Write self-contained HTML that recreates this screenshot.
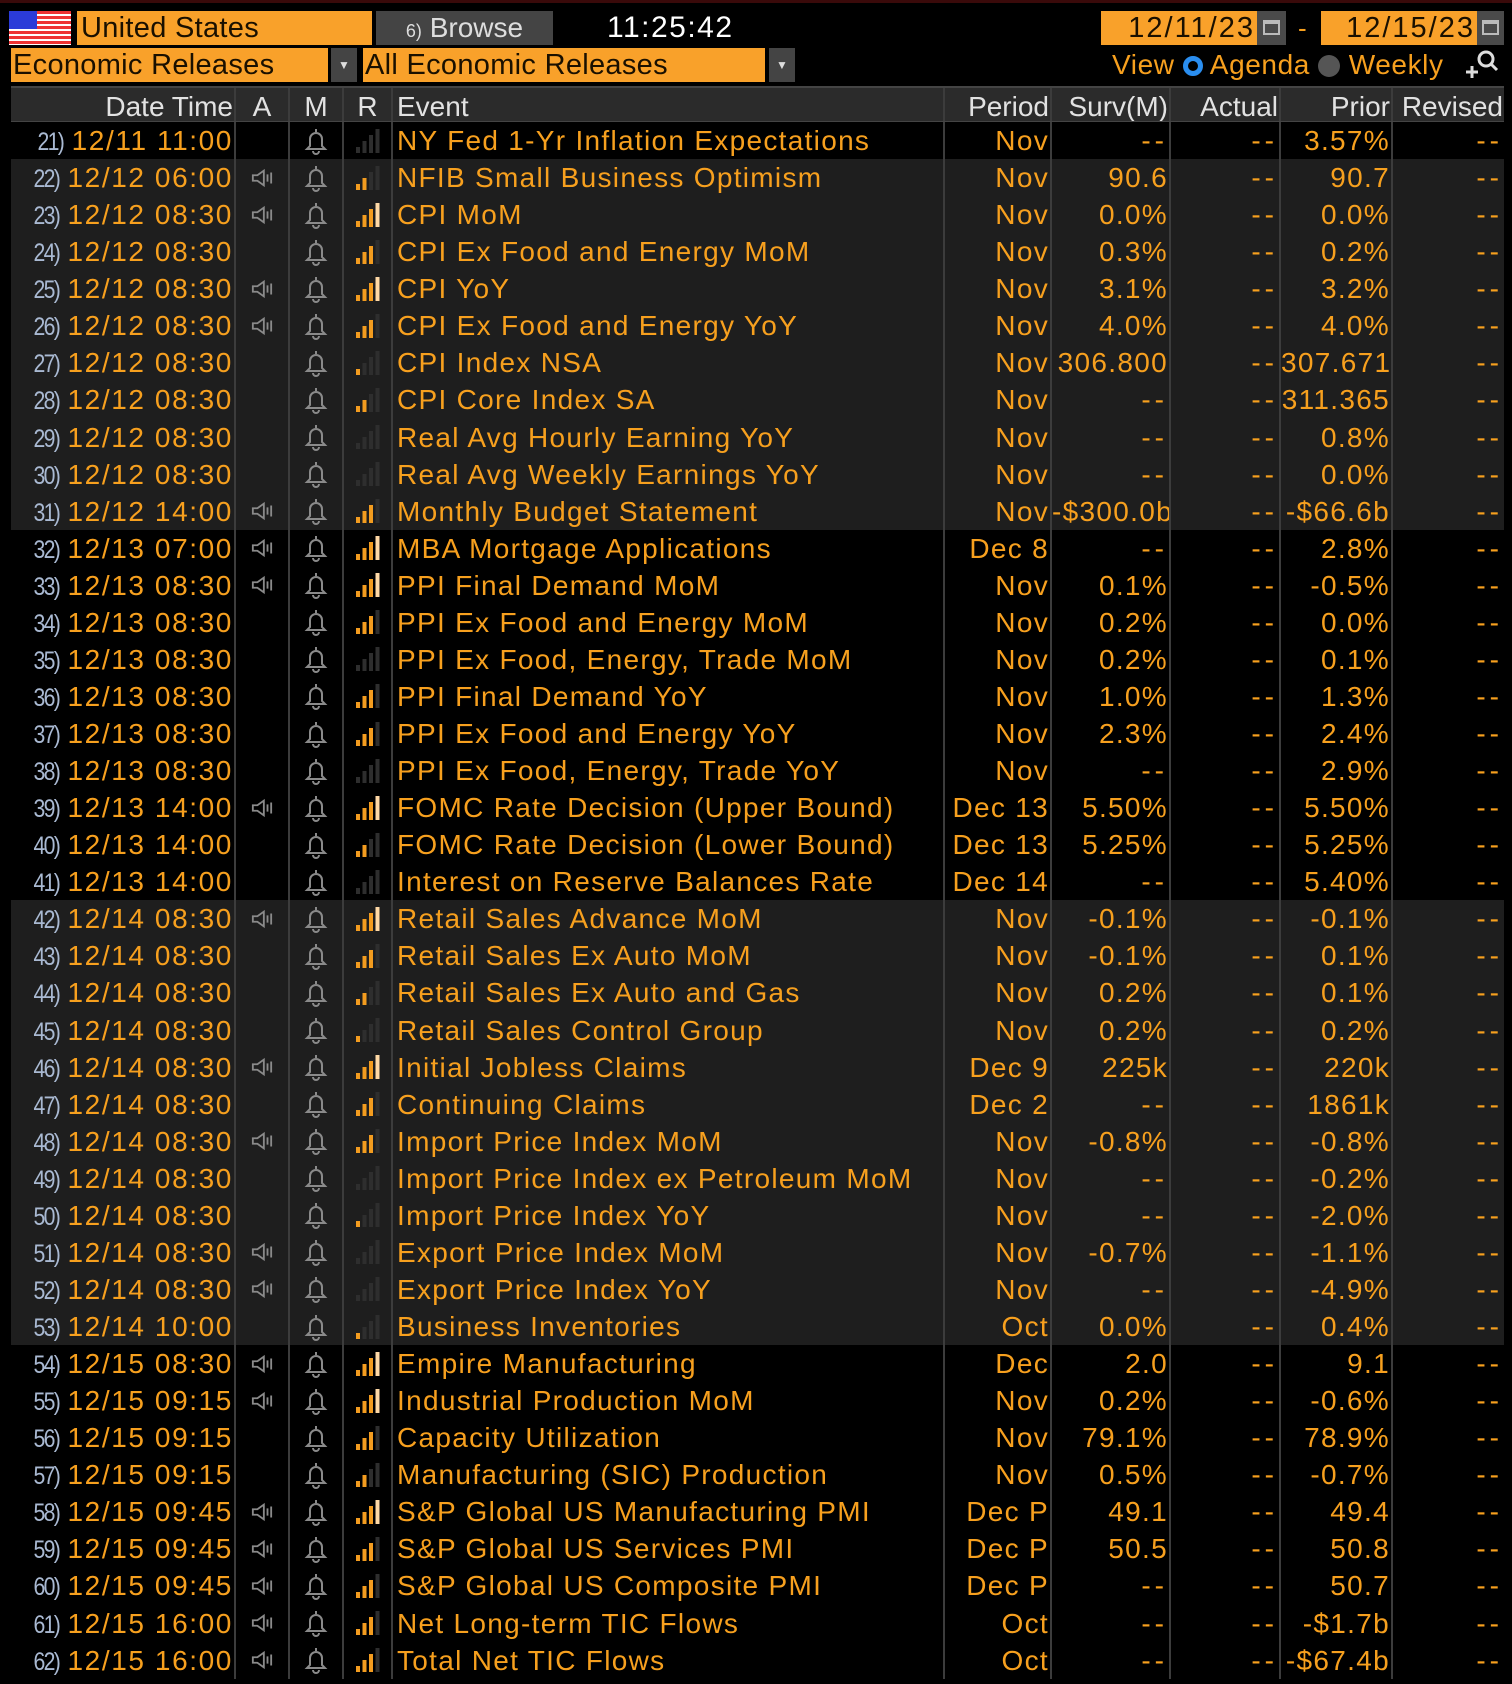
<!DOCTYPE html>
<html><head><meta charset="utf-8"><style>
*{margin:0;padding:0;box-sizing:border-box}
body{width:1512px;height:1684px;background:#000;overflow:hidden;font-family:"Liberation Sans",sans-serif;position:relative;color:#f7a01e}
.ab{position:absolute}
.topline{left:0;top:0;width:1512px;height:3px;background:#3a0a0a}
.ob{background:#f9a12a;color:#1a1000;font-size:29px;line-height:34px;white-space:nowrap;overflow:hidden;letter-spacing:0.3px}
.gb{background:#444;color:#ddd}
.cal{background:#4a4a4a}
#tbl{position:absolute;left:11px;top:86px;width:1493px}
.r{display:grid;grid-template-columns:225px 54px 54px 49px 552px 107px 119px 110px 112px 111px;height:37.07px;font-size:28px;line-height:37px;white-space:nowrap;letter-spacing:1.3px}
.r>div{border-right:2px solid #3c3c3c;overflow:hidden;position:relative}
.r>div:last-child{border-right:none}
.g{background:#1e1e1e}
.k{background:#000}
.h{background:#2b2b2b;color:#e2e2e2;height:36px;border-top:2px solid #444;border-bottom:1px solid #444;letter-spacing:0}
.rt{text-align:right;padding-right:1px}
.t{letter-spacing:1.6px}
.n{font-size:25px;color:#a9b9d2;letter-spacing:-2px;margin-right:8px;display:inline-block;transform:scaleX(.85);transform-origin:right}
.ev{padding-left:4px}
.ic{display:flex;align-items:center;justify-content:center}
.d{letter-spacing:4px}
svg{display:block}
</style></head><body>
<svg width="0" height="0" style="position:absolute">
<defs>
<symbol id="bell" viewBox="0 0 26 28"><path d="M13 2v3M7 19V12a6 6 0 0 1 12 0v7l3 3H4z M10 24a3 3 0 0 0 6 0" fill="none" stroke="#8a8a8a" stroke-width="2"/></symbol>
<symbol id="spk" viewBox="0 0 26 24"><path d="M3 9h5l7-5v16l-7-5H3z" fill="none" stroke="#8a8a8a" stroke-width="2"/><path d="M19 8v8M23 6v12" stroke="#8a8a8a" stroke-width="2"/></symbol>
</defs></svg>
<div class="ab topline"></div>
<div class="ab" style="left:9px;top:11px;width:62px;height:34px;background:repeating-linear-gradient(#e33 0 3px,#fff 3px 5px)">
<div style="width:28px;height:18px;background:#2b3bd8"></div></div>
<div class="ab ob" style="left:77px;top:11px;width:295px;height:34px;padding-left:4px">United States</div>
<div class="ab gb" style="left:376px;top:11px;width:177px;height:34px;font-size:28px;line-height:34px;text-align:center"><span style="font-size:18px">6)</span> Browse</div>
<div class="ab" style="left:607px;top:11px;color:#fff;font-size:30px;line-height:34px;letter-spacing:1.5px">11:25:42</div>
<div class="ab ob" style="left:1101px;top:11px;width:156px;height:34px;text-align:right;padding-right:2px;letter-spacing:2px">12/11/23</div>
<div class="ab cal" style="left:1257px;top:11px;width:29px;height:34px"><div style="margin:9px 6px;width:17px;height:15px;border:2px solid #bbb;border-top-width:4px"></div></div>
<div class="ab" style="left:1298px;top:11px;color:#f7a01e;font-size:26px;line-height:34px">-</div>
<div class="ab ob" style="left:1321px;top:11px;width:156px;height:34px;text-align:right;padding-right:2px;letter-spacing:2px">12/15/23</div>
<div class="ab cal" style="left:1477px;top:11px;width:27px;height:34px"><div style="margin:9px 5px;width:17px;height:15px;border:2px solid #bbb;border-top-width:4px"></div></div>
<div class="ab ob" style="left:11px;top:48px;width:317px;height:34px;padding-left:2px">Economic Releases</div>
<div class="ab gb" style="left:331px;top:48px;width:26px;height:34px;font-size:12px;line-height:34px;text-align:center">▼</div>
<div class="ab ob" style="left:363px;top:48px;width:402px;height:34px;padding-left:2px">All Economic Releases</div>
<div class="ab gb" style="left:769px;top:48px;width:26px;height:34px;font-size:12px;line-height:34px;text-align:center">▼</div>
<div class="ab" style="left:1112px;top:48px;font-size:28px;line-height:34px;color:#f7a01e;white-space:nowrap;letter-spacing:0.6px">View <span style="display:inline-block;width:20px;height:20px;border:5px solid #2a8ef0;border-radius:50%;vertical-align:-2px"></span> Agenda <span style="display:inline-block;width:22px;height:22px;background:#555;border-radius:50%;vertical-align:-3px"></span> Weekly</div>
<svg class="ab" style="left:1462px;top:48px" width="38" height="32" viewBox="0 0 38 32"><circle cx="24" cy="11" r="7" fill="none" stroke="#ddd" stroke-width="3"/><path d="M29 16l6 6M4 24h12M10 18v12" stroke="#ddd" stroke-width="3"/></svg>

<div id="tbl">
<div class="r h"><div class="rt">Date Time</div><div style="text-align:center">A</div><div style="text-align:center">M</div><div style="text-align:center">R</div><div class="ev">Event</div><div class="rt">Period</div><div class="rt">Surv(M)</div><div class="rt">Actual</div><div class="rt">Prior</div><div class="rt">Revised</div></div>
<div id="rows"></div>
</div>
<script>
var D=[
[21,"12/11 11:00",0,0,"NY Fed 1-Yr Inflation Expectations","Nov","--","--","3.57%","k"],
[22,"12/12 06:00",1,2,"NFIB Small Business Optimism","Nov","90.6","--","90.7","g"],
[23,"12/12 08:30",1,4,"CPI MoM","Nov","0.0%","--","0.0%","g"],
[24,"12/12 08:30",0,3,"CPI Ex Food and Energy MoM","Nov","0.3%","--","0.2%","g"],
[25,"12/12 08:30",1,4,"CPI YoY","Nov","3.1%","--","3.2%","g"],
[26,"12/12 08:30",1,3,"CPI Ex Food and Energy YoY","Nov","4.0%","--","4.0%","g"],
[27,"12/12 08:30",0,1,"CPI Index NSA","Nov","306.800","--","307.671","g"],
[28,"12/12 08:30",0,2,"CPI Core Index SA","Nov","--","--","311.365","g"],
[29,"12/12 08:30",0,0,"Real Avg Hourly Earning YoY","Nov","--","--","0.8%","g"],
[30,"12/12 08:30",0,0,"Real Avg Weekly Earnings YoY","Nov","--","--","0.0%","g"],
[31,"12/12 14:00",1,3,"Monthly Budget Statement","Nov","-$300.0b","--","-$66.6b","g"],
[32,"12/13 07:00",1,4,"MBA Mortgage Applications","Dec 8","--","--","2.8%","k"],
[33,"12/13 08:30",1,4,"PPI Final Demand MoM","Nov","0.1%","--","-0.5%","k"],
[34,"12/13 08:30",0,3,"PPI Ex Food and Energy MoM","Nov","0.2%","--","0.0%","k"],
[35,"12/13 08:30",0,0,"PPI Ex Food, Energy, Trade MoM","Nov","0.2%","--","0.1%","k"],
[36,"12/13 08:30",0,3,"PPI Final Demand YoY","Nov","1.0%","--","1.3%","k"],
[37,"12/13 08:30",0,3,"PPI Ex Food and Energy YoY","Nov","2.3%","--","2.4%","k"],
[38,"12/13 08:30",0,0,"PPI Ex Food, Energy, Trade YoY","Nov","--","--","2.9%","k"],
[39,"12/13 14:00",1,4,"FOMC Rate Decision (Upper Bound)","Dec 13","5.50%","--","5.50%","k"],
[40,"12/13 14:00",0,2,"FOMC Rate Decision (Lower Bound)","Dec 13","5.25%","--","5.25%","k"],
[41,"12/13 14:00",0,0,"Interest on Reserve Balances Rate","Dec 14","--","--","5.40%","k"],
[42,"12/14 08:30",1,4,"Retail Sales Advance MoM","Nov","-0.1%","--","-0.1%","g"],
[43,"12/14 08:30",0,3,"Retail Sales Ex Auto MoM","Nov","-0.1%","--","0.1%","g"],
[44,"12/14 08:30",0,2,"Retail Sales Ex Auto and Gas","Nov","0.2%","--","0.1%","g"],
[45,"12/14 08:30",0,1,"Retail Sales Control Group","Nov","0.2%","--","0.2%","g"],
[46,"12/14 08:30",1,4,"Initial Jobless Claims","Dec 9","225k","--","220k","g"],
[47,"12/14 08:30",0,3,"Continuing Claims","Dec 2","--","--","1861k","g"],
[48,"12/14 08:30",1,3,"Import Price Index MoM","Nov","-0.8%","--","-0.8%","g"],
[49,"12/14 08:30",0,0,"Import Price Index ex Petroleum MoM","Nov","--","--","-0.2%","g"],
[50,"12/14 08:30",0,1,"Import Price Index YoY","Nov","--","--","-2.0%","g"],
[51,"12/14 08:30",1,0,"Export Price Index MoM","Nov","-0.7%","--","-1.1%","g"],
[52,"12/14 08:30",1,0,"Export Price Index YoY","Nov","--","--","-4.9%","g"],
[53,"12/14 10:00",0,1,"Business Inventories","Oct","0.0%","--","0.4%","g"],
[54,"12/15 08:30",1,4,"Empire Manufacturing","Dec","2.0","--","9.1","k"],
[55,"12/15 09:15",1,4,"Industrial Production MoM","Nov","0.2%","--","-0.6%","k"],
[56,"12/15 09:15",0,3,"Capacity Utilization","Nov","79.1%","--","78.9%","k"],
[57,"12/15 09:15",0,2,"Manufacturing (SIC) Production","Nov","0.5%","--","-0.7%","k"],
[58,"12/15 09:45",1,4,"S&amp;P Global US Manufacturing PMI","Dec P","49.1","--","49.4","k"],
[59,"12/15 09:45",1,3,"S&amp;P Global US Services PMI","Dec P","50.5","--","50.8","k"],
[60,"12/15 09:45",1,3,"S&amp;P Global US Composite PMI","Dec P","--","--","50.7","k"],
[61,"12/15 16:00",1,3,"Net Long-term TIC Flows","Oct","--","--","-$1.7b","k"],
[62,"12/15 16:00",1,3,"Total Net TIC Flows","Oct","--","--","-$67.4b","k"]];
function bars(n){var s='<svg width="26" height="26" viewBox="0 0 26 26">';for(var i=0;i<4;i++){var h=6+i*6,c=i<n?(i==3?'#ffd9a6':'#f39c1f'):'#2e2e2e';s+='<rect x="'+(1+i*6.5)+'" y="'+(25-h)+'" width="4" height="'+h+'" fill="'+c+'"/>';}return s+'</svg>';}
function v(x){return x=='--'?'<span class="d">--</span>':x;}
var h='';D.forEach(function(d){h+='<div class="r '+d[9]+'"><div class="rt t"><span class="n">'+d[0]+')</span>'+d[1]+'</div><div class="ic">'+(d[2]?'<svg width="24" height="22"><use href="#spk"/></svg>':'')+'</div><div class="ic"><svg width="26" height="28"><use href="#bell"/></svg></div><div class="ic">'+bars(d[3])+'</div><div class="ev">'+d[4]+'</div><div class="rt">'+d[5]+'</div><div class="rt">'+v(d[6])+'</div><div class="rt">'+v(d[7])+'</div><div class="rt">'+v(d[8])+'</div><div class="rt"><span class="d">--</span></div></div>';});
document.getElementById('rows').innerHTML=h;
</script>
</body></html>
